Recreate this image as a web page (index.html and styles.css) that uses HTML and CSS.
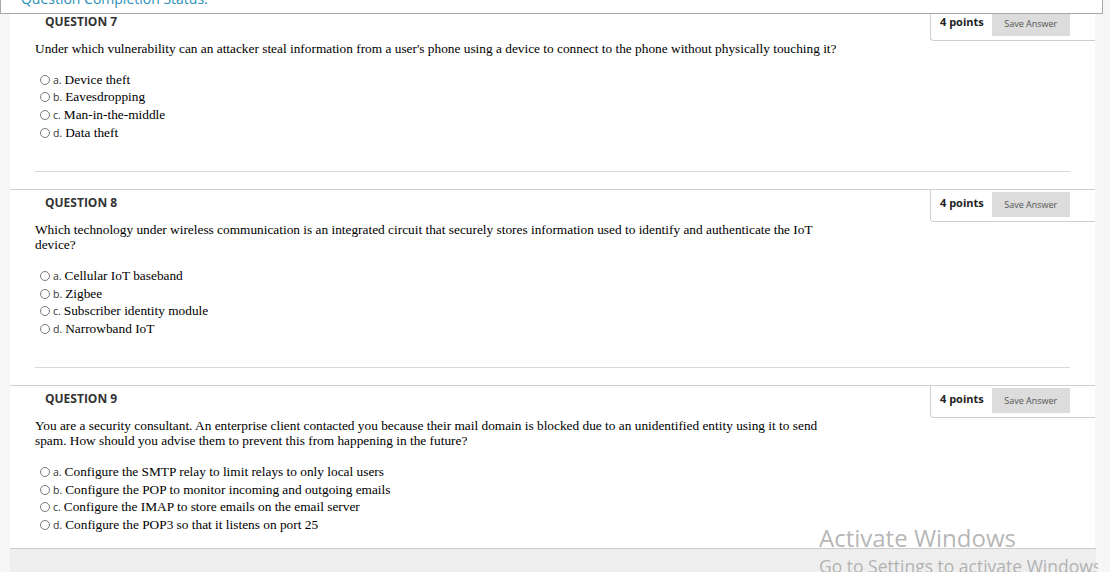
FILE: index.html
```html
<!DOCTYPE html>
<html>
<head>
<meta charset="utf-8">
<link rel="stylesheet" href="styles.css">
</head>
<body>
<div class="status"><span class="status-text">&#8226; Question Completion Status:</span></div>

<div class="page">
  <div class="question q-first">
    <div class="q-head">
      <div class="q-title">QUESTION 7</div>
      <div class="q-points"><span class="pts">4 points</span><span class="save">Save Answer</span></div>
    </div>
    <div class="q-text">Under which vulnerability can an attacker steal information from a user's phone using a device to connect to the phone without physically touching it?</div>
    <ul class="opts">
      <li><span class="radio"></span><span class="let">a.</span>Device theft</li>
      <li><span class="radio"></span><span class="let">b.</span>Eavesdropping</li>
      <li><span class="radio"></span><span class="let">c.</span>Man-in-the-middle</li>
      <li><span class="radio"></span><span class="let">d.</span>Data theft</li>
    </ul>
    <div class="q-divider"></div>
  </div>

  <div class="question">
    <div class="q-head">
      <div class="q-title">QUESTION 8</div>
      <div class="q-points"><span class="pts">4 points</span><span class="save">Save Answer</span></div>
    </div>
    <div class="q-text">Which technology under wireless communication is an integrated circuit that securely stores information used to identify and authenticate the IoT device?</div>
    <ul class="opts">
      <li><span class="radio"></span><span class="let">a.</span>Cellular IoT baseband</li>
      <li><span class="radio"></span><span class="let">b.</span>Zigbee</li>
      <li><span class="radio"></span><span class="let">c.</span>Subscriber identity module</li>
      <li><span class="radio"></span><span class="let">d.</span>Narrowband IoT</li>
    </ul>
    <div class="q-divider"></div>
  </div>

  <div class="question">
    <div class="q-head">
      <div class="q-title">QUESTION 9</div>
      <div class="q-points"><span class="pts">4 points</span><span class="save">Save Answer</span></div>
    </div>
    <div class="q-text">You are a security consultant. An enterprise client contacted you because their mail domain is blocked due to an unidentified entity using it to send spam. How should you advise them to prevent this from happening in the future?</div>
    <ul class="opts">
      <li><span class="radio"></span><span class="let">a.</span>Configure the SMTP relay to limit relays to only local users</li>
      <li><span class="radio"></span><span class="let">b.</span>Configure the POP to monitor incoming and outgoing emails</li>
      <li><span class="radio"></span><span class="let">c.</span>Configure the IMAP to store emails on the email server</li>
      <li><span class="radio"></span><span class="let">d.</span>Configure the POP3 so that it listens on port 25</li>
    </ul>
    <div class="q-divider"></div>
  </div>
</div>

<div class="submit-bar"></div>

<div class="activate">
  <div class="act-title">Activate Windows</div>
  <div class="act-sub">Go to Settings to activate Windows.</div>
</div>
</body>
</html>
```

FILE: styles.css
```css
html, body {
  margin: 0;
  padding: 0;
  background: #f6f6f6;
  height: 572px;
  overflow: hidden;
}

.page {
  margin-left: 10px;
  width: 1085px;
  background: #ffffff;
  padding-top: 8px;
  min-height: 600px;
}

.status {
  position: absolute;
  left: 0;
  top: 0;
  width: 1101px;
  height: 13px;
  background: #ffffff;
  border: 1px solid #a8a8a8;
  border-top: none;
  overflow: hidden;
  z-index: 5;
}

.status-text {
  position: absolute;
  left: 11px;
  top: -11px;
  font-family: "Open Sans", sans-serif;
  font-size: 14px;
  line-height: 20px;
  color: #2a8fb8;
}

.question {
  border-top: 1px solid #cfcfcf;
}

.q-head {
  display: flex;
  justify-content: space-between;
  align-items: flex-start;
}

.q-title {
  font-family: "Open Sans", sans-serif;
  font-weight: bold;
  font-size: 12px;
  line-height: 16px;
  color: #333333;
  padding-left: 35px;
  padding-top: 5px;
}

.q-points {
  display: flex;
  align-items: flex-start;
  gap: 8px;
  height: 32px;
  padding-left: 9px;
  border-left: 1px solid #cfcfcf;
  border-bottom: 1px solid #cfcfcf;
  border-bottom-left-radius: 4px;
  box-sizing: border-box;
  width: 165px;
}

.pts {
  font-family: "Open Sans", sans-serif;
  font-weight: bold;
  font-size: 11px;
  line-height: 16px;
  color: #222222;
  padding-top: 5px;
}

.save {
  display: flex;
  align-items: center;
  justify-content: center;
  margin-top: 2px;
  width: 78px;
  height: 25px;
  background: #dcdcdc;
  font-family: "Open Sans", sans-serif;
  font-size: 9px;
  color: #555555;
}

.q-text {
  padding-left: 25px;
  width: 810px;
  font-family: "Liberation Serif", serif;
  font-size: 13.33px;
  line-height: 15.5px;
  color: #000000;
}

.opts {
  list-style: none;
  margin: 14.5px 0 0 0;
  padding: 0 0 0 30px;
}

.opts li {
  display: flex;
  align-items: center;
  height: 17.67px;
  font-family: "Liberation Serif", serif;
  font-size: 13.33px;
  color: #000000;
  white-space: nowrap;
}

.radio {
  display: inline-block;
  width: 8px;
  height: 8px;
  border: 1px solid #7a7a7a;
  border-radius: 50%;
  margin-right: 3px;
  background: #ffffff;
}

.let {
  font-family: "Open Sans", sans-serif;
  font-size: 10.5px;
  color: #333333;
  margin-right: 3px;
}

.q-divider {
  margin: 29px 25px 17px 25px;
  border-top: 1px solid #d9d9d9;
}

.submit-bar {
  position: absolute;
  left: 10px;
  top: 548px;
  width: 1086px;
  height: 30px;
  background: #eeeeee;
  border-top: 1px solid #cccccc;
  box-sizing: border-box;
}

.activate {
  position: absolute;
  left: 819px;
  top: 521px;
  width: 279px;
  overflow: hidden;
  font-family: "Open Sans", sans-serif;
  color: rgba(150, 150, 150, 0.7);
  white-space: nowrap;
  z-index: 10;
}

.act-title {
  font-size: 24px;
  line-height: 33px;
}

.act-sub {
  font-size: 17.5px;
  line-height: 24px;
}
```
